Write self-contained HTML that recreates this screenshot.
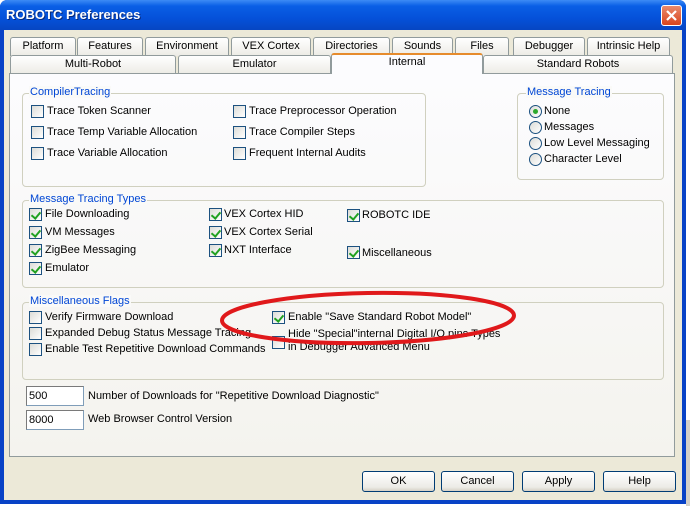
<!DOCTYPE html><html><head><style>
*{box-sizing:border-box;margin:0;padding:0}
body{width:690px;height:506px;background:#fff;font-family:"Liberation Sans",sans-serif;font-size:11px;color:#000;position:relative;overflow:hidden}
.a{position:absolute}
.win{left:0;top:0;width:686px;height:504px;background:#0842c6;border-radius:7px 7px 0 0}
.title{left:0;top:0;width:686px;height:30px;border-radius:7px 7px 0 0;background:linear-gradient(#3d8bf5,#0a5fe6 20%,#0551da 60%,#0646c2);}
.tt{left:6px;top:7px;color:#fff;font-weight:bold;font-size:13px;text-shadow:1px 1px #0a2a7a}
.close{left:661px;top:5px;width:21px;height:21px;border:1px solid #fff;border-radius:3px;background:linear-gradient(#e98a6c,#d9441c);}
.client{left:4px;top:30px;width:678px;height:470px;background:#ece9d8}
.tab{position:absolute;height:19px;border:1px solid #919b9c;border-bottom:none;border-radius:3px 3px 0 0;background:linear-gradient(#fff,#ecebe5);text-align:center;line-height:17px}
.panel{left:9px;top:73px;width:666px;height:384px;border:1px solid #919b9c;background:linear-gradient(#fcfcfe,#f4f3ee)}
.grp{position:absolute;border:1px solid #d0d0bf;border-radius:4px}
.gl{position:absolute;color:#0046d5;background:#fafaf8;padding:0 1px;line-height:12px}
.cb{position:absolute;width:13px;height:13px;border:1px solid #1c5180;background:linear-gradient(135deg,#dcdcd7,#fff)}
.cb.c::after{content:"";position:absolute;left:3px;top:1px;width:4px;height:7px;border:solid #21a121;border-width:0 2px 2px 0;transform:rotate(40deg)}
.lb{position:absolute;line-height:13px;white-space:nowrap}
.rb{position:absolute;width:13px;height:13px;border:1px solid #1c5180;border-radius:50%;background:linear-gradient(135deg,#dcdcd7,#fff)}
.rb.c::after{content:"";position:absolute;left:3px;top:3px;width:5px;height:5px;border-radius:50%;background:#2ca82c}
.tb{position:absolute;width:58px;height:20px;border:1px solid #7f9db9;border-top-color:#7a7a7a;border-left-color:#7a7a7a;background:#fff;padding:2px 2px;line-height:14px}
.btn{position:absolute;top:471px;width:73px;height:21px;border:1px solid #003c74;border-radius:3px;background:linear-gradient(#fff,#ecebe6 80%,#d6d0c5);text-align:center;line-height:19px}
</style></head><body>
<div class="a" style="left:686px;top:420px;width:4px;height:86px;background:#d4d0c8"></div>
<div class="a win"></div>
<div class="a title"></div>
<div class="a tt">ROBOTC Preferences</div>
<div class="a close"><svg width="19" height="19"><path d="M5 5L14 14M14 5L5 14" stroke="#fff" stroke-width="2.2"/></svg></div>
<div class="a client"></div>
<div class="tab" style="left:10px;top:37px;width:66px">Platform</div>
<div class="tab" style="left:77px;top:37px;width:66px">Features</div>
<div class="tab" style="left:145px;top:37px;width:84px">Environment</div>
<div class="tab" style="left:231px;top:37px;width:80px">VEX Cortex</div>
<div class="tab" style="left:313px;top:37px;width:77px">Directories</div>
<div class="tab" style="left:392px;top:37px;width:61px">Sounds</div>
<div class="tab" style="left:455px;top:37px;width:54px">Files</div>
<div class="tab" style="left:513px;top:37px;width:72px">Debugger</div>
<div class="tab" style="left:587px;top:37px;width:83px">Intrinsic Help</div>
<div class="tab" style="left:10px;top:55px;width:166px">Multi-Robot</div>
<div class="tab" style="left:178px;top:55px;width:153px">Emulator</div>
<div class="tab" style="left:483px;top:55px;width:190px">Standard Robots</div>
<div class="a panel"></div>
<div class="tab" style="left:331px;top:53px;width:152px;height:21px;background:#fcfcfe;border-top:2px solid #e68b2c;line-height:14px;border-bottom:none">Internal</div>

<div class="grp" style="left:22px;top:93px;width:404px;height:94px"></div>
<div class="gl" style="left:29px;top:86px">CompilerTracing</div>
<div class="cb" style="left:31px;top:105px"></div><div class="lb" style="left:47px;top:105px">Trace Token Scanner</div>
<div class="cb" style="left:31px;top:126px"></div><div class="lb" style="left:47px;top:126px">Trace Temp Variable Allocation</div>
<div class="cb" style="left:31px;top:147px"></div><div class="lb" style="left:47px;top:147px">Trace Variable Allocation</div>
<div class="cb" style="left:233px;top:105px"></div><div class="lb" style="left:249px;top:105px">Trace Preprocessor Operation</div>
<div class="cb" style="left:233px;top:126px"></div><div class="lb" style="left:249px;top:126px">Trace Compiler Steps</div>
<div class="cb" style="left:233px;top:147px"></div><div class="lb" style="left:249px;top:147px">Frequent Internal Audits</div>

<div class="grp" style="left:517px;top:93px;width:147px;height:87px"></div>
<div class="gl" style="left:526px;top:86px">Message Tracing</div>
<div class="rb c" style="left:529px;top:105px"></div><div class="lb" style="left:544px;top:105px">None</div>
<div class="rb" style="left:529px;top:121px"></div><div class="lb" style="left:544px;top:121px">Messages</div>
<div class="rb" style="left:529px;top:137px"></div><div class="lb" style="left:544px;top:137px">Low Level Messaging</div>
<div class="rb" style="left:529px;top:153px"></div><div class="lb" style="left:544px;top:153px">Character Level</div>

<div class="grp" style="left:22px;top:200px;width:642px;height:88px"></div>
<div class="gl" style="left:29px;top:193px">Message Tracing Types</div>
<div class="cb c" style="left:29px;top:208px"></div><div class="lb" style="left:45px;top:208px">File Downloading</div>
<div class="cb c" style="left:29px;top:226px"></div><div class="lb" style="left:45px;top:226px">VM Messages</div>
<div class="cb c" style="left:29px;top:244px"></div><div class="lb" style="left:45px;top:244px">ZigBee Messaging</div>
<div class="cb c" style="left:29px;top:262px"></div><div class="lb" style="left:45px;top:262px">Emulator</div>
<div class="cb c" style="left:209px;top:208px"></div><div class="lb" style="left:224px;top:208px">VEX Cortex HID</div>
<div class="cb c" style="left:209px;top:226px"></div><div class="lb" style="left:224px;top:226px">VEX Cortex Serial</div>
<div class="cb c" style="left:209px;top:244px"></div><div class="lb" style="left:224px;top:244px">NXT Interface</div>
<div class="cb c" style="left:347px;top:209px"></div><div class="lb" style="left:362px;top:209px">ROBOTC IDE</div>
<div class="cb c" style="left:347px;top:246px"></div><div class="lb" style="left:362px;top:247px">Miscellaneous</div>

<div class="grp" style="left:22px;top:302px;width:642px;height:78px"></div>
<div class="gl" style="left:29px;top:295px">Miscellaneous Flags</div>
<div class="cb" style="left:29px;top:311px"></div><div class="lb" style="left:45px;top:311px">Verify Firmware Download</div>
<div class="cb" style="left:29px;top:327px"></div><div class="lb" style="left:45px;top:327px">Expanded Debug Status Message Tracing</div>
<div class="cb" style="left:29px;top:343px"></div><div class="lb" style="left:45px;top:343px">Enable Test Repetitive Download Commands</div>
<div class="cb c" style="left:272px;top:311px"></div><div class="lb" style="left:288px;top:311px">Enable "Save Standard Robot Model"</div>
<div class="cb" style="left:272px;top:336px"></div><div class="lb" style="left:288px;top:328px;line-height:13px">Hide "Special"internal Digital I/O pins Types<br>in Debugger Advanced Menu</div>

<div class="tb" style="left:26px;top:386px">500</div><div class="lb" style="left:88px;top:390px">Number of Downloads for "Repetitive Download Diagnostic"</div>
<div class="tb" style="left:26px;top:410px">8000</div><div class="lb" style="left:88px;top:413px">Web Browser Control Version</div>

<svg class="a" style="left:0;top:0" width="690" height="506"><ellipse cx="368" cy="318" rx="146" ry="25" transform="rotate(-1 368 318)" fill="none" stroke="#e0191b" stroke-width="4"/></svg>

<div class="btn" style="left:362px">OK</div>
<div class="btn" style="left:441px">Cancel</div>
<div class="btn" style="left:522px">Apply</div>
<div class="btn" style="left:603px">Help</div>
</body></html>
